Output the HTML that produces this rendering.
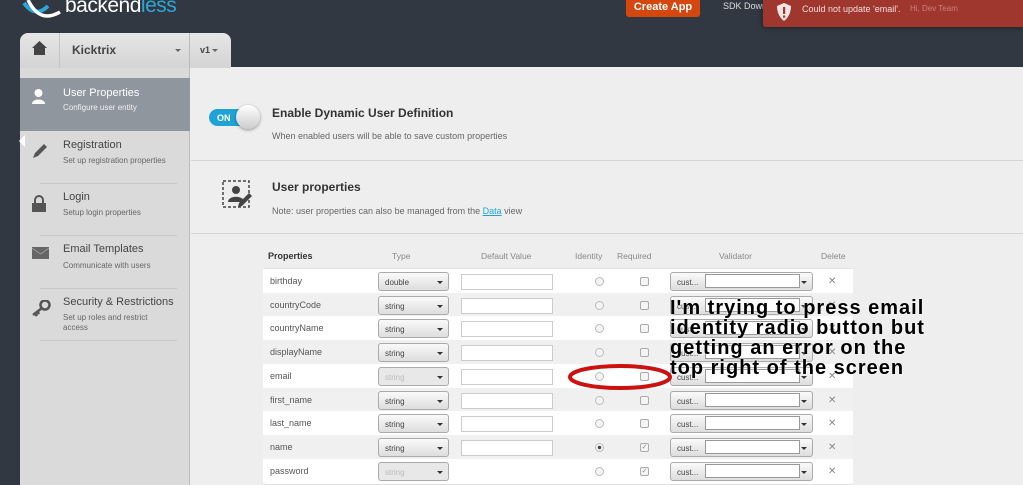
<!DOCTYPE html>
<html><head><meta charset="utf-8"><style>
*{margin:0;padding:0;box-sizing:border-box}
body{width:1023px;height:485px;overflow:hidden;position:relative;background:#eeeeee;font-family:"Liberation Sans",Arial,sans-serif}
.a{position:absolute}
.hdr{left:0;top:0;width:1023px;height:67px;background:#323841}
.side{left:0;top:0;width:20px;height:485px;background:#323841}
.tabs{left:20px;top:33px;width:211px;height:35px;background:linear-gradient(#e6e6e6,#d4d4d4);border-radius:8px 8px 0 0}
.menu{left:20px;top:68px;width:170px;height:417px;background:#dadada;border-right:1px solid #bbb}
.act{left:20px;top:78px;width:170px;height:53px;background:#8f969e}
.mt{font-size:11px;color:#444}
.ms{font-size:8px;color:#666}
.ln{height:1px;background:#c8c8c8}
.sel{position:absolute;height:19px;border:1px solid #aaa;border-radius:3px;background:linear-gradient(#fafafa,#ddd);font-size:8px;color:#444;padding:5px 0 0 6px}
.sel:after{content:"";position:absolute;right:5px;top:8px;border:3px solid transparent;border-top:3px solid #333}
.inp{position:absolute;height:16px;width:92px;background:#fff;border:1px solid #ccc}
.rad{position:absolute;width:9px;height:9px;border-radius:50%;border:1px solid #bbb;background:#f4f4f4}
.chk{position:absolute;width:9px;height:9px;border-radius:2px;border:1px solid #aaa;background:#f4f4f4}
.row{position:absolute;left:263px;width:590px;height:24px}
.nm{position:absolute;left:7px;top:7px;font-size:9px;color:#555}
.x{position:absolute;left:565px;top:7px;font-size:10px;color:#888}
.th{position:absolute;top:251px;font-size:8.5px;color:#888}
</style></head><body>
<div class="a hdr"></div>
<div class="a side"></div>
<svg class="a" style="left:22px;top:0" width="40" height="22" viewBox="0 0 40 22"><path d="M2 3 C10 14,18 14,26 6" stroke="#29a8d8" stroke-width="4" fill="none"/><path d="M6 0 C14 16,24 20,38 12" stroke="#fff" stroke-width="3.5" fill="none"/></svg>
<div class="a" style="left:65px;top:-6px;font-size:21px;color:#fff;letter-spacing:-0.5px">backend<span style="color:#29a8d8">less</span></div>
<div class="a" style="left:626px;top:0;width:74px;height:17px;background:#d4480f;border-radius:0 0 3px 3px;color:#fff;font-size:11px;font-weight:bold;text-align:center;padding-top:1px">Create App</div>
<div class="a" style="left:723px;top:1px;font-size:9px;color:#ddd">SDK Downloads</div>
<div class="a" style="left:763px;top:0;width:260px;height:27px;background:#a0372f;box-shadow:0 0 6px rgba(0,0,0,.5);border-radius:0 0 0 3px"></div>
<svg class="a" style="left:776px;top:3px" width="16" height="18" viewBox="0 0 16 18"><path d="M8 0 L15 3 C15 10,12 15,8 18 C4 15,1 10,1 3Z" fill="#f3e5e3"/><rect x="7" y="4" width="2.2" height="7" fill="#a0372f"/><rect x="7" y="12.5" width="2.2" height="2.2" fill="#a0372f"/></svg>
<div class="a" style="left:802px;top:4px;font-size:9px;color:#f2dcd9">Could not update 'email'.</div>
<div class="a" style="left:910px;top:4px;font-size:8px;color:#c9817a">Hi, Dev Team</div>

<div class="a tabs"></div>
<div class="a" style="left:59px;top:33px;width:1px;height:35px;background:#c4c4c4"></div>
<div class="a" style="left:189px;top:33px;width:1px;height:35px;background:#bbb"></div>
<svg class="a" style="left:32px;top:41px" width="15" height="14" viewBox="0 0 15 14"><path d="M7.5 0 L15 7 H13 V14 H2 V7 H0Z" fill="#444"/></svg>
<div class="a" style="left:72px;top:43px;font-size:12px;font-weight:bold;color:#444">Kicktrix</div>
<div class="a" style="left:175px;top:49px;border:3px solid transparent;border-top:3px solid #666"></div>
<div class="a" style="left:200px;top:45px;font-size:9px;font-weight:bold;color:#444">v1</div>
<div class="a" style="left:212px;top:49px;border:3px solid transparent;border-top:3px solid #666"></div>

<div class="a menu"></div>
<div class="a act"></div>
<div class="a" style="left:184px;top:88px;border:6px solid transparent;border-right:6px solid #eee"></div>
<div class="a" style="left:13px;top:135px;border:6px solid transparent;border-right:6px solid #fff"></div>
<svg class="a" style="left:32px;top:88px" width="13" height="16" viewBox="0 0 13 16"><circle cx="6.5" cy="5" r="4" fill="#fff"/><path d="M0 16 C0 10,13 10,13 16Z" fill="#fff"/></svg>
<div class="a mt" style="left:63px;top:87px;color:#fff">User Properties</div>
<div class="a ms" style="left:63px;top:103px;color:#f0f0f0">Configure user entity</div>
<svg class="a" style="left:32px;top:143px" width="16" height="16" viewBox="0 0 16 16"><path d="M1 15 L3 10 L12 1 L15 4 L6 13Z" fill="#555"/></svg>
<div class="a mt" style="left:63px;top:139px">Registration</div>
<div class="a ms" style="left:63px;top:156px">Set up registration properties</div>
<div class="a ln" style="left:40px;top:183px;width:137px"></div>
<svg class="a" style="left:32px;top:195px" width="14" height="17" viewBox="0 0 14 17"><path d="M3 8 V5 a4 4 0 0 1 8 0 V8" stroke="#555" stroke-width="2" fill="none"/><rect x="0" y="8" width="14" height="9" fill="#555"/></svg>
<div class="a mt" style="left:63px;top:191px">Login</div>
<div class="a ms" style="left:63px;top:208px">Setup login properties</div>
<div class="a ln" style="left:40px;top:235px;width:137px"></div>
<svg class="a" style="left:32px;top:247px" width="17" height="12" viewBox="0 0 17 12"><rect width="17" height="12" fill="#666"/><path d="M0 1 L8.5 7 L17 1" stroke="#999" fill="none"/></svg>
<div class="a mt" style="left:63px;top:243px">Email Templates</div>
<div class="a ms" style="left:63px;top:261px">Communicate with users</div>
<div class="a ln" style="left:40px;top:288px;width:137px"></div>
<svg class="a" style="left:31px;top:300px" width="20" height="18" viewBox="0 0 20 18"><circle cx="14" cy="5" r="4.5" stroke="#555" stroke-width="2.5" fill="none"/><path d="M11 8 L2 15 M4 13 L6 16 M6 11 L8 14" stroke="#555" stroke-width="2.5"/></svg>
<div class="a mt" style="left:63px;top:296px">Security &amp; Restrictions</div>
<div class="a ms" style="left:63px;top:313px;line-height:10px">Set up roles and restrict<br>access</div>
<div class="a ln" style="left:40px;top:340px;width:137px"></div>

<div class="a" style="left:209px;top:109px;width:50px;height:17px;border-radius:9px;background:#1fa3d6;color:#fff;font-size:9px;font-weight:bold;padding:4px 0 0 8px">ON</div>
<div class="a" style="left:236px;top:105px;width:24px;height:24px;border-radius:50%;background:linear-gradient(#fff,#ccc);box-shadow:0 1px 3px rgba(0,0,0,.4)"></div>
<div class="a" style="left:272px;top:106px;font-size:12px;font-weight:bold;color:#333">Enable Dynamic User Definition</div>
<div class="a" style="left:272px;top:131px;font-size:9px;color:#666">When enabled users will be able to save custom properties</div>
<div class="a" style="left:191px;top:160px;width:832px;height:1px;background:#d4d4d4"></div>
<svg class="a" style="left:222px;top:180px" width="32" height="30" viewBox="0 0 32 30"><rect x="1" y="1" width="26" height="26" stroke="#444" stroke-width="1.5" stroke-dasharray="3 2" fill="none"/><circle cx="14" cy="10" r="4" fill="#444"/><path d="M6 22 C6 15,22 15,22 22Z" fill="#444"/><path d="M16 27 L17 23 L27 13 L30 16 L20 26Z" fill="#444"/></svg>
<div class="a" style="left:272px;top:180px;font-size:12px;font-weight:bold;color:#333">User properties</div>
<div class="a" style="left:272px;top:206px;font-size:9px;color:#666">Note: user properties can also be managed from the <span style="color:#1fa3d6;text-decoration:underline">Data</span> view</div>
<div class="a" style="left:191px;top:233px;width:832px;height:1px;background:#d4d4d4"></div>

<div class="th" style="left:268px;color:#333;font-weight:bold;font-size:9px">Properties</div>
<div class="th" style="left:392px">Type</div>
<div class="th" style="left:481px">Default Value</div>
<div class="th" style="left:575px">Identity</div>
<div class="th" style="left:617px">Required</div>
<div class="th" style="left:719px">Validator</div>
<div class="th" style="left:821px">Delete</div>
<div class="a" style="left:263px;top:268px;width:590px;height:217px;background:#fff;border:1px solid #e0e0e0;border-radius:3px"></div>

<div id="rows"></div>
<script>
var n=["birthday","countryCode","countryName","displayName","email","first_name","last_name","name","password"];
var t=["double","string","string","string","string","string","string","string","string"];
var h="";
for(var i=0;i<9;i++){var y=269+i*23.7;var bg=i%2?"#f0f0f0":"#fff";var dis=(i==4||i==8);
h+='<div class="row" style="top:'+y+'px;background:'+bg+'">';
h+='<div class="nm">'+n[i]+'</div>';
h+='<div class="sel" style="left:115px;top:3px;width:71px;'+(dis?'color:#bbb;background:#e8e8e8':'')+'">'+t[i]+'</div>';
if(i!=8)h+='<div class="inp" style="left:198px;top:5px"></div>';
h+='<div class="rad" style="left:332px;top:8px;'+(i==7?'background:radial-gradient(#444 30%,#f4f4f4 40%)':'')+'"></div>';
h+='<div class="chk" style="left:377px;top:8px;font-size:7px;line-height:7px;color:#888;text-align:center">'+(i>=7?'✓':'')+'</div>';
h+='<div class="sel" style="left:407px;top:3px;width:143px">cust...</div>';
h+='<div class="inp" style="left:442px;top:5px;width:95px;height:14px;border-color:#999"></div>';
h+='<div class="x">✕</div></div>';}
document.getElementById("rows").innerHTML=h;
</script>
<svg class="a" style="left:566px;top:362px" width="108" height="30"><ellipse cx="54" cy="15" rx="50" ry="11" stroke="#cc1111" stroke-width="4" fill="none"/></svg>
<div class="a" style="left:670px;top:298px;font-size:20px;font-weight:bold;color:#000;line-height:20px;letter-spacing:1px;white-space:nowrap;text-shadow:0 0 2px #fff">I'm trying to press email<br>identity radio button but<br>getting an error on the<br>top right of the screen</div>
</body></html>
